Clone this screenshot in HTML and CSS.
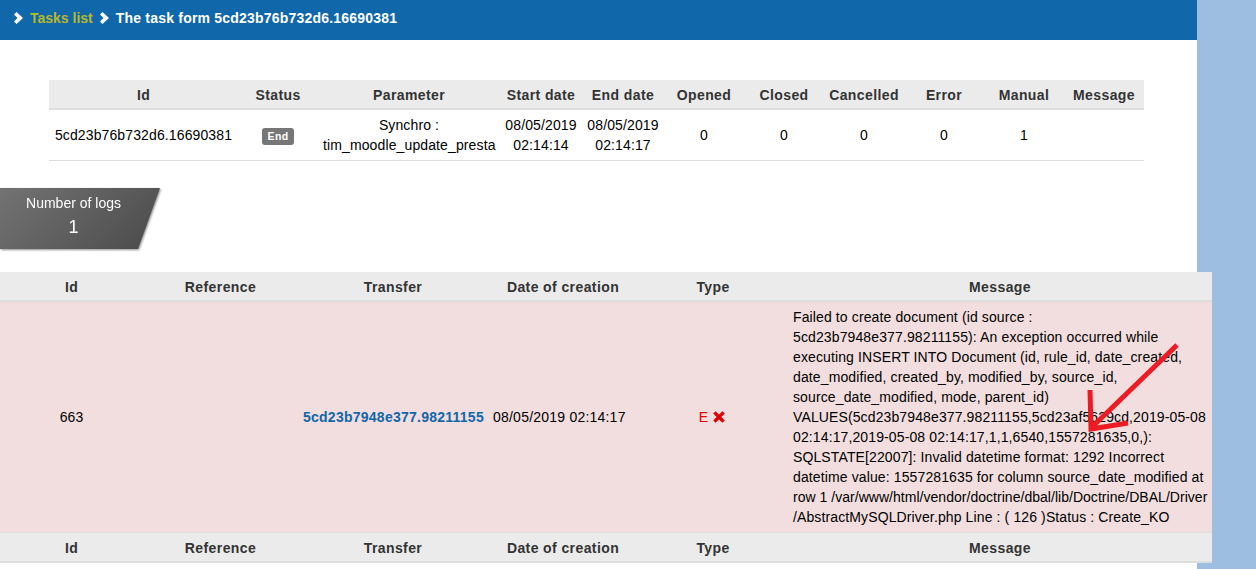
FILE: index.html
```html
<!DOCTYPE html>
<html lang="en">
<head>
    <meta charset="UTF-8">
    <title>Task form</title>
    <link rel="stylesheet" href="styles.css">
</head>
<body>
    <div class="main">
        <div class="topBar">
            <svg class="chevron" viewBox="0 0 10 12"><polygon points="0,2.5 2.5,0 9,6 2.5,12 0,9.5 3.5,6"/></svg>
            <a href="javascript:;" class="taskLink">Tasks list</a>
            <svg class="chevron" viewBox="0 0 10 12"><polygon points="0,2.5 2.5,0 9,6 2.5,12 0,9.5 3.5,6"/></svg>
            <span class="crumb">The task form 5cd23b76b732d6.16690381</span>
        </div>

        <table class="taskTable">
            <colgroup>
                <col class="c189"><col class="c80"><col class="c182"><col class="c82"><col class="c82">
                <col class="c80"><col class="c80"><col class="c80"><col class="c80"><col class="c80"><col class="c80">
            </colgroup>
            <thead>
                <tr>
                    <th>Id</th><th>Status</th><th>Parameter</th><th>Start date</th><th>End date</th>
                    <th>Opened</th><th>Closed</th><th>Cancelled</th><th>Error</th><th>Manual</th><th>Message</th>
                </tr>
            </thead>
            <tbody>
                <tr>
                    <td>5cd23b76b732d6.16690381</td>
                    <td><span class="label">End</span></td>
                    <td>Synchro :<br>tim_moodle_update_presta</td>
                    <td>08/05/2019<br>02:14:14</td>
                    <td>08/05/2019<br>02:14:17</td>
                    <td>0</td><td>0</td><td>0</td><td>0</td><td>1</td><td></td>
                </tr>
            </tbody>
        </table>

        <div class="countWrap">
            <div class="count">
                <p>Number of logs</p>
                <p class="countNum">1</p>
            </div>
        </div>

        <table class="logTable">
            <colgroup>
                <col class="c143"><col class="c155"><col class="c190"><col class="c150"><col class="c150"><col class="c424">
            </colgroup>
            <thead>
                <tr><th>Id</th><th>Reference</th><th>Transfer</th><th>Date of creation</th><th>Type</th><th>Message</th></tr>
            </thead>
            <tbody>
                <tr class="danger">
                    <td>663</td>
                    <td></td>
                    <td class="left"><a href="javascript:;" class="docLink">5cd23b7948e377.98211155</a></td>
                    <td class="left date">08/05/2019 02:14:17</td>
                    <td class="type">E <svg class="cross" viewBox="0 0 12 12"><polygon points="2.6,0.2 6,3.6 9.4,0.2 11.8,2.6 8.4,6 11.8,9.4 9.4,11.8 6,8.4 2.6,11.8 0.2,9.4 3.6,6 0.2,2.6"/></svg></td>
                    <td class="msg">Failed to create document (id source :<br>5cd23b7948e377.98211155): An exception occurred while<br>executing INSERT INTO Document (id, rule_id, date_created,<br>date_modified, created_by, modified_by, source_id,<br>source_date_modified, mode, parent_id)<br>VALUES(5cd23b7948e377.98211155,5cd23af5629cd,2019-05-08<br>02:14:17,2019-05-08 02:14:17,1,1,6540,1557281635,0,):<br>SQLSTATE[22007]: Invalid datetime format: 1292 Incorrect<br>datetime value: 1557281635 for column source_date_modified at<br><span class="filePath">row 1 /var/www/html/vendor/doctrine/dbal/lib/Doctrine/DBAL/Driver</span><br>/AbstractMySQLDriver.php Line : ( 126 )Status : Create_KO</td>
                </tr>
            </tbody>
            <tfoot>
                <tr><th>Id</th><th>Reference</th><th>Transfer</th><th>Date of creation</th><th>Type</th><th>Message</th></tr>
            </tfoot>
        </table>
    </div>

    <!-- red arrow drawn over the screenshot -->
    <svg class="arrow" viewBox="0 0 100 95">
        <path d="M95 3 L8 87 M8 48 L9 87 L46 81"/>
    </svg>
</body>
</html>
```

FILE: styles.css
```css
*{
    margin: 0;
    padding: 0;
    box-sizing: border-box;
}
html,body{
    height: 569px;
    overflow: hidden;
}
body{
    background: #9dbee0;
    font-family: "Liberation Sans", Arial, sans-serif;
    font-size: 14px;
    line-height: 20px;
    color: #000;
}
a{
    text-decoration: none;
}
.main{
    width: 1197px;
    height: 569px;
    background: #fff;
}
.topBar{
    height: 40px;
    background: #1067a9;
    display: flex;
    align-items: center;
    padding: 0 0 4px 14px;
    font-weight: bold;
    color: #fff;
}
.chevron{
    width: 10px;
    height: 12px;
    fill: #fff;
}
.taskLink{
    color: #b8b82c;
    margin: 0 7px 0 6px;
}
.crumb{
    margin-left: 6px;
    letter-spacing: 0.2px;
}
table{
    border-collapse: separate;
    border-spacing: 0;
    table-layout: fixed;
}
th{
    height: 30px;
    background: #ebebeb;
    color: #333;
    font-weight: bold;
    letter-spacing: 0.4px;
    text-align: center;
    padding: 5px 5px 3px;
    border-bottom: 2px solid #ddd;
}
td{
    text-align: center;
    padding: 5px;
    vertical-align: middle;
    letter-spacing: 0.12px;
}
.taskTable{
    width: 1095px;
    margin: 40px 0 0 49px;
}
.taskTable td{
    height: 51px;
    border-bottom: 1px solid #ddd;
}
.c189{ width: 189px; }
.c80{ width: 80px; }
.c182{ width: 182px; }
.c82{ width: 82px; }
.c143{ width: 143px; }
.c155{ width: 155px; }
.c190{ width: 190px; }
.c150{ width: 150px; }
.c424{ width: 424px; }
.label{
    display: inline-block;
    background: #777;
    color: #fff;
    font-size: 10.5px;
    font-weight: bold;
    letter-spacing: 0.4px;
    line-height: 11px;
    padding: 3px 5.5px;
    border-radius: 3px;
}
.countWrap{
    width: 163px;
    margin-top: 27px;
    filter: drop-shadow(1px 1px 1px rgba(0,0,0,.45));
}
.count{
    width: 160px;
    height: 61px;
    padding-top: 5px;
    padding-right: 13px;
    background: linear-gradient(135deg, #737373, #4a4a4a);
    clip-path: polygon(0 0, 100% 0, 138px 100%, 0 100%);
    color: #fff;
    text-align: center;
}
.countNum{
    font-size: 18px;
    line-height: 28px;
}
.logTable{
    width: 1212px;
    margin-top: 23px;
}
.logTable tfoot th{
    height: 31px;
    border-top: 1px solid #ddd;
}
.danger td{
    background: #f2dede;
}
.left{
    text-align: left;
}
.date{
    letter-spacing: 0.22px;
}
.docLink{
    color: #1067a9;
    font-weight: bold;
    letter-spacing: 0.25px;
}
.type{
    color: #e00000;
    padding-right: 7px;
}
.cross{
    width: 12px;
    height: 12px;
    margin-left: 1px;
    fill: #e00000;
    vertical-align: -1px;
}
.msg{
    text-align: left;
    white-space: nowrap;
}
.filePath{
    letter-spacing: 0.03px;
}
.arrow{
    position: absolute;
    left: 1082px;
    top: 342px;
    width: 100px;
    height: 95px;
}
.arrow path{
    fill: none;
    stroke: #ed1c24;
    stroke-width: 5;
}
```
